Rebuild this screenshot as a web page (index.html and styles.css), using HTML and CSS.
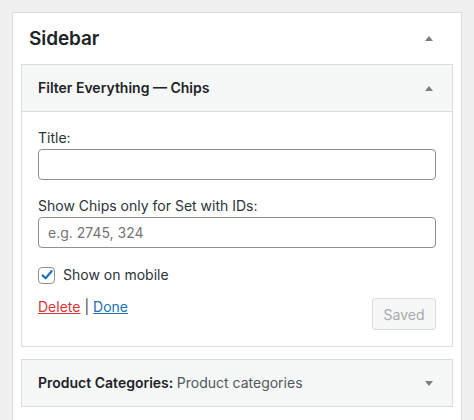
FILE: index.html
```html
<!DOCTYPE html>
<html>
<head>
<meta charset="utf-8">
<link rel="stylesheet" href="styles.css">
</head>
<body>
<div class="sidebar">
  <div class="sidebar-head">
    <h2 class="sidebar-title">Sidebar</h2>
    <span class="arrow up"></span>
  </div>
  <div class="widget">
    <div class="widget-head">
      <h3 class="widget-title">Filter Everything — Chips</h3>
      <span class="arrow up"></span>
    </div>
    <div class="widget-body">
      <label class="field-label">Title:</label>
      <input class="field-input" type="text">
      <label class="field-label second">Show Chips only for Set with IDs:</label>
      <input class="field-input" type="text" placeholder="e.g. 2745, 324">
      <div class="check-row">
        <span class="checkbox">
          <svg width="14" height="14" viewBox="0 0 14 14"><path d="M2.6 7.4 L5.6 10.3 L11.6 3.2" fill="none" stroke="#2271b1" stroke-width="2.2" stroke-linecap="round" stroke-linejoin="round"/></svg>
        </span>
        <span class="check-label">Show on mobile</span>
      </div>
      <div class="actions">
        <div class="links"><a class="link-delete">Delete</a><span class="sep">|</span><a class="link-done">Done</a></div>
        <button class="btn-saved">Saved</button>
      </div>
    </div>
  </div>
  <div class="widget collapsed">
    <div class="widget-head">
      <h3 class="widget-title">Product Categories<span class="colon">:</span> <span class="instance">Product categories</span></h3>
      <span class="arrow down"></span>
    </div>
  </div>
</div>
</body>
</html>
```
FILE: styles.css
```css
* { box-sizing: border-box; }
html, body { height: 100%; }
body {
  margin: 0;
  background: #f0f0f1;
  font-family: Inter, "Noto Sans", "Liberation Sans", sans-serif;
  font-size: 14px;
  line-height: 20px;
  color: #1d2327;
  overflow: hidden;
}
.sidebar {
  margin: 12px 12px 0;
  background: #fff;
  border: 1px solid #dcdcde;
  border-bottom: none;
  padding: 0 8px 0;
  height: 408px;
}
.sidebar-head {
  height: 51px;
  display: flex;
  align-items: center;
  justify-content: space-between;
  padding: 0 20px 0 8px;
}
.sidebar-title {
  margin: 0;
  font-size: 19px;
  font-weight: 600;
  color: #1d2327;
  letter-spacing: -0.1px;
}
.arrow {
  width: 0;
  height: 0;
  border-left: 4px solid transparent;
  border-right: 4px solid transparent;
}
.arrow.up { border-bottom: 5px solid #787c82; }
.arrow.down { border-top: 5px solid #787c82; }
.widget {
  border: 1px solid #dcdcde;
  background: #fff;
}
.widget.collapsed { margin-top: 12px; }
.widget-head {
  height: 47px;
  background: #f6f7f7;
  display: flex;
  align-items: center;
  justify-content: space-between;
  padding: 0 19px 0 16px;
  border-bottom: 1px solid #dcdcde;
}
.widget.collapsed .widget-head { border-bottom: none; height: 46px; }
.widget-title {
  margin: 0;
  font-size: 14px;
  font-weight: 600;
  color: #1d2327;
}
.widget-title .colon { font-weight: 600; }
.instance { font-weight: 400; color: #50575e; }
.widget-body {
  display: flex;
  flex-direction: column;
  padding: 16px 16px 16px;
}
.field-label {
  color: #2c3338;
  margin-bottom: 1px;
}
.field-label.second { margin-top: 16px; }
.field-input {
  height: 31px;
  border: 1px solid #8c8f94;
  border-radius: 4px;
  padding: 0 9px;
  font-family: inherit;
  font-size: 14px;
  color: #2c3338;
  background: #fff;
  outline: none;
}
.field-input::placeholder { color: #757575; }
.check-row {
  display: flex;
  align-items: center;
  margin-top: 17px;
  height: 20px;
}
.checkbox {
  width: 17px;
  height: 17px;
  border: 1px solid #8c8f94;
  border-radius: 4px;
  display: flex;
  align-items: center;
  justify-content: center;
  margin-right: 8px;
}
.check-label { color: #2c3338; }
.actions {
  display: flex;
  justify-content: space-between;
  align-items: flex-start;
  margin-top: 12px;
}
.links { color: #3c434a; }
.sep { color: #3c434a; margin: 0 4px; }
.link-delete { color: #d63638; text-decoration: underline; }
.link-done { color: #2271b1; text-decoration: underline; }
.btn-saved {
  width: 64px;
  height: 32px;
  margin-top: 1px;
  background: #f6f7f7;
  border: 1px solid #dcdcde;
  border-radius: 3px;
  color: #a7aaad;
  font-family: inherit;
  font-size: 14px;
  padding: 0;
}
```
